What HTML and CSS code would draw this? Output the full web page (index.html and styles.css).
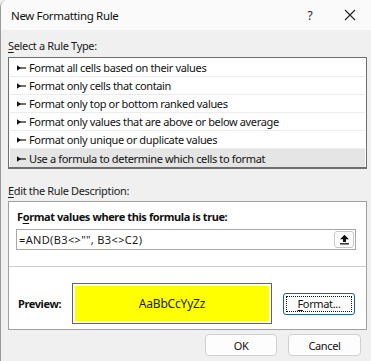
FILE: index.html
```html
<!DOCTYPE html>
<html>
<head>
<meta charset="utf-8">
<link rel="stylesheet" href="styles.css">
</head>
<body>
<div class="window">
  <div class="titlebar">
    <span class="title">New Formatting Rule</span>
    <span class="help">?</span>
    <span class="close"><svg width="12" height="12" viewBox="0 0 12 12"><path d="M1 1 L11 11 M11 1 L1 11" stroke="#222" stroke-width="1.1" fill="none"/></svg></span>
  </div>
  <div class="content">
    <div class="label"><u>S</u>elect a Rule Type:</div>
    <div class="listbox">
      <div class="row"><svg class="arrow" width="9" height="6" viewBox="0 0 9 6"><path d="M0 0.3 L0 5.7 L4 3 Z" fill="#111"/><rect x="2" y="2.4" width="7" height="1.2" fill="#111"/></svg>Format all cells based on their values</div>
      <div class="row"><svg class="arrow" width="9" height="6" viewBox="0 0 9 6"><path d="M0 0.3 L0 5.7 L4 3 Z" fill="#111"/><rect x="2" y="2.4" width="7" height="1.2" fill="#111"/></svg>Format only cells that contain</div>
      <div class="row"><svg class="arrow" width="9" height="6" viewBox="0 0 9 6"><path d="M0 0.3 L0 5.7 L4 3 Z" fill="#111"/><rect x="2" y="2.4" width="7" height="1.2" fill="#111"/></svg>Format only top or bottom ranked values</div>
      <div class="row"><svg class="arrow" width="9" height="6" viewBox="0 0 9 6"><path d="M0 0.3 L0 5.7 L4 3 Z" fill="#111"/><rect x="2" y="2.4" width="7" height="1.2" fill="#111"/></svg>Format only values that are above or below average</div>
      <div class="row"><svg class="arrow" width="9" height="6" viewBox="0 0 9 6"><path d="M0 0.3 L0 5.7 L4 3 Z" fill="#111"/><rect x="2" y="2.4" width="7" height="1.2" fill="#111"/></svg>Format only unique or duplicate values</div>
      <div class="row selected"><svg class="arrow" width="9" height="6" viewBox="0 0 9 6"><path d="M0 0.3 L0 5.7 L4 3 Z" fill="#111"/><rect x="2" y="2.4" width="7" height="1.2" fill="#111"/></svg>Use a formula to determine which cells to format</div>
    </div>
    <div class="label label2"><u>E</u>dit the Rule Description:</div>
    <div class="descbox">
      <div class="formula-section">
        <div class="bold-label">F<u>o</u>rmat values where this formula is true:</div>
        <div class="input">
          <span class="input-text">=AND(B3&lt;&gt;"", B3&lt;&gt;C2)</span>
          <span class="collapse-btn"><svg width="11" height="11" viewBox="0 0 11 11"><path d="M5.5 0.8 L10 5.3 L7 5.3 L7 8 L4 8 L4 5.3 L1 5.3 Z" fill="#111"/><rect x="1" y="9.2" width="9" height="1.3" fill="#111"/></svg></span>
        </div>
      </div>
      <div class="preview-section">
        <div class="bold-label preview-label">Preview:</div>
        <div class="preview-box"><div class="preview-inner">AaBbCcYyZz</div></div>
        <div class="btn format-btn"><span class="focus"><u>F</u>ormat...</span></div>
      </div>
    </div>
    <div class="buttons">
      <div class="btn ok-btn">OK</div>
      <div class="btn cancel-btn">Cancel</div>
    </div>
  </div>
</div>
</body>
</html>
```

FILE: styles.css
```css
* { box-sizing: border-box; }
html, body {
  margin: 0;
  padding: 0;
  width: 371px;
  height: 361px;
  overflow: hidden;
}
body {
  font-family: "Noto Sans", "Liberation Sans", sans-serif;
  font-size: 11px;
  letter-spacing: -0.35px;
  color: #1a1a1a;
  background: #f0f0f0;
}
u { text-decoration: underline; text-underline-offset: 2px; text-decoration-thickness: 1px; }
.window {
  width: 371px;
  height: 361px;
  background: #f0f0f0;
  border-left: 1px solid #9a9a9a;
  border-top-left-radius: 7px;
  overflow: hidden;
}
.titlebar {
  height: 30px;
  background: #fafafa;
  display: flex;
  align-items: center;
  padding-left: 10px;
}
.title { flex: 1; font-size: 11.5px; color: #111; }
.help { width: 20px; margin-right: 24px; text-align: center; font-size: 12px; color: #222; }
.close { width: 12px; height: 12px; margin-right: 15px; display: flex; }
.content {
  padding: 9px 4px 0 7px;
  display: flex;
  flex-direction: column;
}
.label {
  height: 14px;
  line-height: 14px;
  margin-bottom: 4px;
  color: #1a1a1a;
}
.listbox {
  height: 112px;
  background: #fff;
  border: 1px solid #6e6e6e;
  border-bottom-width: 2px;
  padding: 1px 1px 0 1px;
  display: flex;
  flex-direction: column;
}
.row {
  height: 18px;
  display: flex;
  align-items: center;
  padding-left: 7px;
  border-bottom: 1px solid #ececec;
  white-space: nowrap;
  color: #111;
}
.row.selected { background: #e5e5e5; border-bottom: none; }
.arrow { margin-right: 3px; margin-top: 1px; flex-shrink: 0; }
.label2 { margin-top: 15px; margin-bottom: 3px; }
.descbox {
  height: 129px;
  background: #fff;
  border: 1px solid #a0a0a0;
  display: flex;
  flex-direction: column;
}
.formula-section {
  height: 65px;
  padding: 8px 10px 0 8px;
  border-bottom: 1px solid #cfcfcf;
}
.bold-label {
  font-weight: bold;
  height: 14px;
  line-height: 14px;
  color: #111;
  letter-spacing: -0.4px;
}
.input {
  margin-top: 5px;
  margin-left: -1px;
  height: 21px;
  border: 1px solid #a8a8a8;
  display: flex;
  align-items: center;
  justify-content: space-between;
  padding-left: 2px;
  padding-right: 1px;
}
.input-text { white-space: nowrap; letter-spacing: 0.35px; }
.collapse-btn {
  width: 20px;
  height: 17px;
  border: 1px solid #c8c8c8;
  border-radius: 3px;
  background: #fdfdfd;
  display: flex;
  align-items: center;
  justify-content: center;
}
.preview-section {
  flex: 1;
  display: flex;
  align-items: center;
  padding: 16px 0 5px 9px;
}
.preview-label { width: 54px; }
.preview-box {
  width: 200px;
  height: 41px;
  border: 1px solid #646464;
  padding: 2px;
  background: #fff;
}
.preview-inner {
  height: 100%;
  background: #ffff00;
  display: flex;
  align-items: center;
  justify-content: center;
  font-size: 12px;
  letter-spacing: -0.2px;
  color: #222;
}
.btn {
  height: 22px;
  border: 1px solid #d0d0d0;
  border-radius: 4px;
  background: #fdfdfd;
  display: flex;
  align-items: center;
  justify-content: center;
  color: #111;
}
.format-btn {
  width: 72px;
  margin-left: 11px;
  border: 1px solid #1f5f9f;
  border-radius: 3px;
  padding: 2px;
}
.format-btn .focus {
  width: 100%;
  height: 100%;
  border: 1px dotted #111;
  display: flex;
  align-items: center;
  justify-content: center;
}
.buttons {
  display: flex;
  justify-content: flex-end;
  gap: 11px;
  margin-top: 4px;
  padding-right: 6px;
}
.ok-btn { width: 72px; }
.cancel-btn { width: 73px; }
```
